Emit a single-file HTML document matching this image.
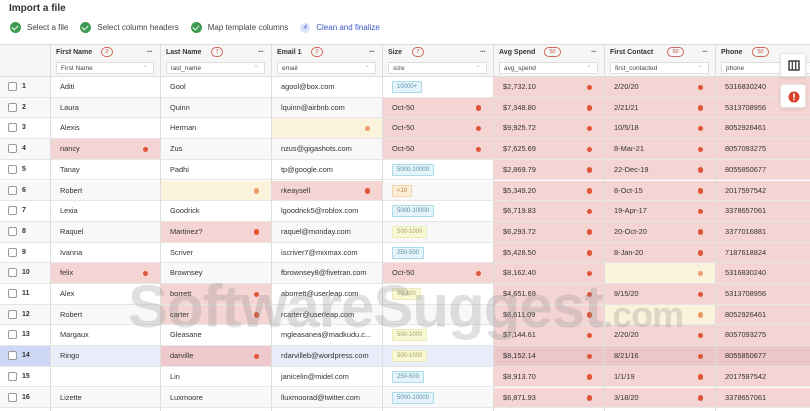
<!DOCTYPE html><html><head><meta charset="utf-8"><style>
*{box-sizing:border-box;margin:0;padding:0}
body{width:810px;height:411px;overflow:hidden;background:#fff;font-family:"Liberation Sans",sans-serif;color:#333;position:relative}
.title{position:absolute;left:9px;top:3px;font-size:10px;color:#333;font-weight:bold}
.steps{position:absolute;left:10px;top:22px;font-size:8px;color:#444;display:flex;align-items:center}
.ck{width:11px;height:11px;border-radius:50%;background:#3e9a50;display:inline-block;margin-right:6px;position:relative}
.ck:after{content:"";position:absolute;left:3px;top:2px;width:3px;height:5px;border:solid #fff;border-width:0 1.5px 1.5px 0;transform:rotate(45deg)}
.steps span.s{margin-right:12px}
.n4{width:10px;height:10px;border-radius:50%;background:#dde4fb;color:#4a62d0;font-size:6px;display:inline-flex;align-items:center;justify-content:center;margin-right:6px}
.hdr{position:absolute;left:0;top:44px;width:810px;height:33px;background:#f6f6f7;border-top:1px solid #ddd;border-bottom:1px solid #ddd}
.col{position:absolute;top:0;height:367px;border-left:1px solid #ddd}
.hc{position:absolute;top:44px;height:33px;font-size:7px;font-weight:bold;color:#333}
.hc .lb{position:absolute;left:6px;top:5px}
.badge{position:absolute;top:3px;height:10px;border:1px solid #d06a5a;border-radius:6px;font-size:5.5px;color:#c0533f;text-align:center;line-height:8px;font-weight:normal}
.dots{position:absolute;right:8px;top:3px;font-size:8px;color:#666;letter-spacing:-1px}
.inp{position:absolute;left:6px;right:6px;top:18px;height:12px;background:#fff;border:1px solid #ddd;font-size:6.5px;font-weight:normal;color:#444;padding:2px 4px}
.inp:after{content:"⌄";position:absolute;right:5px;top:-2px;color:#bbb;font-size:7px}
.row{position:absolute;left:0;width:810px;height:20.7px;border-bottom:1px solid #e6e6e6;font-size:7.4px;color:#333}
.c{position:absolute;top:0;height:100%;padding-left:10px;line-height:20px}
.p{background:#f5d5d3}.y{background:#faf2db}.g{background:#f8f8f9}
.d:after{content:"";position:absolute;right:12px;top:7.5px;width:5.5px;height:5.5px;border-radius:50%;background:#e05538}
.y.d:after{background:#eb9d6a}
.cb{position:absolute;left:8px;top:5px;width:9px;height:9px;border:1px solid #999;border-radius:2px;background:#fff}
.num{position:absolute;left:22px;top:0;line-height:20px;font-weight:bold;font-size:7px}
.t{display:inline-block;font-size:6px;line-height:10px;padding:0 4px;border:1px solid;border-radius:1px;vertical-align:middle}
.tb{background:#e5f4fa;border-color:#a9dbe9;color:#5a8fa8}
.ty{background:#f8f7d6;border-color:#ececb6;color:#a8a25a}
.to{background:#fbeed5;border-color:#f0d6a8;color:#c08a50}
.fb{position:absolute;right:4px;width:26px;height:24px;background:#fff;border:1px solid #e3e3e3;border-radius:3px;box-shadow:0 1px 3px rgba(0,0,0,.1)}
.wm{position:absolute;left:128px;top:272px;font-size:60px;font-weight:bold;color:rgba(140,140,140,.27);letter-spacing:-1px;white-space:nowrap}
.wm small{font-size:36px}
</style></head><body>
<div class="title">Import a file</div>
<div class="steps"><i class="ck"></i><span class="s">Select a file</span><i class="ck"></i><span class="s">Select column headers</span><i class="ck"></i><span class="s">Map template columns</span><i class="n4">4</i><span style="color:#3d56c6">Clean and finalize</span></div>
<div class="hdr"></div>
<div class="hc" style="left:50px;width:110px"><span class="lb">First Name</span><span class="badge" style="left:51px;width:12px">2</span><span class="dots">···</span><div class="inp">First Name</div></div>
<div class="hc" style="left:160px;width:111px"><span class="lb">Last Name</span><span class="badge" style="left:51px;width:12px">7</span><span class="dots">···</span><div class="inp">last_name</div></div>
<div class="hc" style="left:271px;width:111px"><span class="lb">Email 1</span><span class="badge" style="left:40px;width:12px">2</span><span class="dots">···</span><div class="inp">email</div></div>
<div class="hc" style="left:382px;width:111px"><span class="lb">Size</span><span class="badge" style="left:30px;width:12px">7</span><span class="dots">···</span><div class="inp">size</div></div>
<div class="hc" style="left:493px;width:111px"><span class="lb">Avg Spend</span><span class="badge" style="left:51px;width:17px">50</span><span class="dots">···</span><div class="inp">avg_spend</div></div>
<div class="hc" style="left:604px;width:111px"><span class="lb">First Contact</span><span class="badge" style="left:63px;width:17px">50</span><span class="dots">···</span><div class="inp">first_contacted</div></div>
<div class="hc" style="left:715px;width:95px"><span class="lb">Phone</span><span class="badge" style="left:37px;width:17px">50</span><div class="inp" style="right:-10px">phone</div></div>

<div id="rows">
<div class="row g" style="top:77px"><i class="cb"></i><span class="num">1</span><div class="c" style="left:50px;width:110px;background:#fff">Aditi</div><div class="c" style="left:160px;width:111px;background:#fff">Gool</div><div class="c" style="left:271px;width:111px;background:#fff">agool@box.com</div><div class="c" style="left:382px;width:111px;background:#fff"><span class="t tb">10000+</span></div><div class="c p d" style="left:493px;width:111px">$2,732.10</div><div class="c p d" style="left:604px;width:111px">2/20/20</div><div class="c p" style="left:715px;width:95px">5316830240</div></div>
<div class="row g" style="top:97.7px"><i class="cb"></i><span class="num">2</span><div class="c" style="left:50px;width:110px">Laura</div><div class="c" style="left:160px;width:111px">Quinn</div><div class="c" style="left:271px;width:111px">lquinn@airbnb.com</div><div class="c p d" style="left:382px;width:111px">Oct-50</div><div class="c p d" style="left:493px;width:111px">$7,348.80</div><div class="c p d" style="left:604px;width:111px">2/21/21</div><div class="c p" style="left:715px;width:95px">5313708956</div></div>
<div class="row" style="top:118.4px;background:#fff"><i class="cb"></i><span class="num">3</span><div class="c" style="left:50px;width:110px">Alexis</div><div class="c" style="left:160px;width:111px">Herman</div><div class="c y d" style="left:271px;width:111px"></div><div class="c p d" style="left:382px;width:111px">Oct-50</div><div class="c p d" style="left:493px;width:111px">$9,925.72</div><div class="c p d" style="left:604px;width:111px">10/5/18</div><div class="c p" style="left:715px;width:95px">8052926461</div></div>
<div class="row g" style="top:139.1px"><i class="cb"></i><span class="num">4</span><div class="c p d" style="left:50px;width:110px">nancy</div><div class="c" style="left:160px;width:111px">Zus</div><div class="c" style="left:271px;width:111px">nzus@gigashots.com</div><div class="c p d" style="left:382px;width:111px">Oct-50</div><div class="c p d" style="left:493px;width:111px">$7,625.69</div><div class="c p d" style="left:604px;width:111px">8-Mar-21</div><div class="c p" style="left:715px;width:95px">8057093275</div></div>
<div class="row" style="top:159.8px;background:#fff"><i class="cb"></i><span class="num">5</span><div class="c" style="left:50px;width:110px">Tanay</div><div class="c" style="left:160px;width:111px">Padhi</div><div class="c" style="left:271px;width:111px">tp@google.com</div><div class="c" style="left:382px;width:111px"><span class="t tb">5000-10000</span></div><div class="c p d" style="left:493px;width:111px">$2,869.79</div><div class="c p d" style="left:604px;width:111px">22-Dec-19</div><div class="c p" style="left:715px;width:95px">8055850677</div></div>
<div class="row g" style="top:180.5px"><i class="cb"></i><span class="num">6</span><div class="c" style="left:50px;width:110px">Robert</div><div class="c y d" style="left:160px;width:111px"></div><div class="c p d" style="left:271px;width:111px">rkeaysell</div><div class="c" style="left:382px;width:111px"><span class="t to">&lt;10</span></div><div class="c p d" style="left:493px;width:111px">$5,349.20</div><div class="c p d" style="left:604px;width:111px">8-Oct-15</div><div class="c p" style="left:715px;width:95px">2017597542</div></div>
<div class="row" style="top:201.2px;background:#fff"><i class="cb"></i><span class="num">7</span><div class="c" style="left:50px;width:110px">Lexia</div><div class="c" style="left:160px;width:111px">Goodrick</div><div class="c" style="left:271px;width:111px">lgoodrick5@roblox.com</div><div class="c" style="left:382px;width:111px"><span class="t tb">5000-10000</span></div><div class="c p d" style="left:493px;width:111px">$6,719.83</div><div class="c p d" style="left:604px;width:111px">19-Apr-17</div><div class="c p" style="left:715px;width:95px">3378657061</div></div>
<div class="row g" style="top:221.9px"><i class="cb"></i><span class="num">8</span><div class="c" style="left:50px;width:110px">Raquel</div><div class="c p d" style="left:160px;width:111px">Martinez?</div><div class="c" style="left:271px;width:111px">raquel@monday.com</div><div class="c" style="left:382px;width:111px"><span class="t ty">500-1000</span></div><div class="c p d" style="left:493px;width:111px">$6,293.72</div><div class="c p d" style="left:604px;width:111px">20-Oct-20</div><div class="c p" style="left:715px;width:95px">3377016881</div></div>
<div class="row" style="top:242.6px;background:#fff"><i class="cb"></i><span class="num">9</span><div class="c" style="left:50px;width:110px">Ivanna</div><div class="c" style="left:160px;width:111px">Scriver</div><div class="c" style="left:271px;width:111px">iscriver7@mixmax.com</div><div class="c" style="left:382px;width:111px"><span class="t tb">250-500</span></div><div class="c p d" style="left:493px;width:111px">$5,428.50</div><div class="c p d" style="left:604px;width:111px">8-Jan-20</div><div class="c p" style="left:715px;width:95px">7187618824</div></div>
<div class="row g" style="top:263.3px"><i class="cb"></i><span class="num">10</span><div class="c p d" style="left:50px;width:110px">felix</div><div class="c" style="left:160px;width:111px">Brownsey</div><div class="c" style="left:271px;width:111px">fbrownsey8@fivetran.com</div><div class="c p d" style="left:382px;width:111px">Oct-50</div><div class="c p d" style="left:493px;width:111px">$8,162.40</div><div class="c y d" style="left:604px;width:111px"></div><div class="c p" style="left:715px;width:95px">5316830240</div></div>
<div class="row" style="top:284px;background:#fff"><i class="cb"></i><span class="num">11</span><div class="c" style="left:50px;width:110px">Alex</div><div class="c p d" style="left:160px;width:111px">borrett</div><div class="c" style="left:271px;width:111px">aborrett@userleap.com</div><div class="c" style="left:382px;width:111px"><span class="t ty">50-100</span></div><div class="c p d" style="left:493px;width:111px">$4,651.69</div><div class="c p d" style="left:604px;width:111px">9/15/20</div><div class="c p" style="left:715px;width:95px">5313708956</div></div>
<div class="row g" style="top:304.7px"><i class="cb"></i><span class="num">12</span><div class="c" style="left:50px;width:110px">Robert</div><div class="c p d" style="left:160px;width:111px">carter</div><div class="c" style="left:271px;width:111px">rcarter@userleap.com</div><div class="c" style="left:382px;width:111px"></div><div class="c p d" style="left:493px;width:111px">$6,611.09</div><div class="c y d" style="left:604px;width:111px"></div><div class="c p" style="left:715px;width:95px">8052926461</div></div>
<div class="row" style="top:325.4px;background:#fff"><i class="cb"></i><span class="num">13</span><div class="c" style="left:50px;width:110px">Margaux</div><div class="c" style="left:160px;width:111px">Gleasane</div><div class="c" style="left:271px;width:111px">mgleasanea@madkudu.c...</div><div class="c" style="left:382px;width:111px"><span class="t ty">500-1000</span></div><div class="c p d" style="left:493px;width:111px">$7,144.61</div><div class="c p d" style="left:604px;width:111px">2/20/20</div><div class="c p" style="left:715px;width:95px">8057093275</div></div>
<div class="row" style="top:346.1px;background:#e9edf9"><div style="position:absolute;left:0;top:0;width:50px;height:100%;background:#cdd8f6"></div><i class="cb"></i><span class="num">14</span><div class="c" style="left:50px;width:110px">Ringo</div><div class="c p d" style="left:160px;width:111px;background:#eec9cb">darville</div><div class="c" style="left:271px;width:111px">rdarvilleb@wordpress.com</div><div class="c" style="left:382px;width:111px"><span class="t ty">500-1000</span></div><div class="c p d" style="left:493px;width:111px;background:#ecc6c8">$8,152.14</div><div class="c p d" style="left:604px;width:111px;background:#ecc6c8">8/21/16</div><div class="c p" style="left:715px;width:95px;background:#ecc6c8">8055850677</div></div>
<div class="row" style="top:366.8px;background:#fff"><i class="cb"></i><span class="num">15</span><div class="c" style="left:50px;width:110px"></div><div class="c" style="left:160px;width:111px">Lin</div><div class="c" style="left:271px;width:111px">janicelin@midel.com</div><div class="c" style="left:382px;width:111px"><span class="t tb">250-500</span></div><div class="c p d" style="left:493px;width:111px">$8,913.70</div><div class="c p d" style="left:604px;width:111px">1/1/19</div><div class="c p" style="left:715px;width:95px">2017597542</div></div>
<div class="row g" style="top:387.5px"><i class="cb"></i><span class="num">16</span><div class="c" style="left:50px;width:110px">Lizette</div><div class="c" style="left:160px;width:111px">Luxmoore</div><div class="c" style="left:271px;width:111px">lluxmoorad@twitter.com</div><div class="c" style="left:382px;width:111px"><span class="t tb">5000-10000</span></div><div class="c p d" style="left:493px;width:111px">$6,871.93</div><div class="c p d" style="left:604px;width:111px">3/18/20</div><div class="c p" style="left:715px;width:95px">3378657061</div></div>
</div>
<div class="col" style="left:50px;top:44px"></div><div class="col" style="left:160px;top:44px"></div><div class="col" style="left:271px;top:44px"></div><div class="col" style="left:382px;top:44px"></div><div class="col" style="left:493px;top:44px"></div><div class="col" style="left:604px;top:44px"></div><div class="col" style="left:715px;top:44px"></div>
<div class="wm">SoftwareSuggest<small>.com</small></div>
<div class="fb" style="top:53px"><svg width="26" height="24" viewBox="0 0 26 24"><rect x="8" y="7" width="10" height="9" fill="none" stroke="#333" stroke-width="1.4"/><line x1="11.3" y1="7" x2="11.3" y2="16" stroke="#333" stroke-width="1.2"/><line x1="14.7" y1="7" x2="14.7" y2="16" stroke="#333" stroke-width="1.2"/></svg></div>
<div class="fb" style="top:84px"><svg width="26" height="24" viewBox="0 0 26 24"><circle cx="13" cy="12" r="5.5" fill="#d9412a"/><rect x="12.2" y="8.5" width="1.6" height="4.2" fill="#fff"/><rect x="12.2" y="13.7" width="1.6" height="1.6" fill="#fff"/></svg></div>
</body></html>
